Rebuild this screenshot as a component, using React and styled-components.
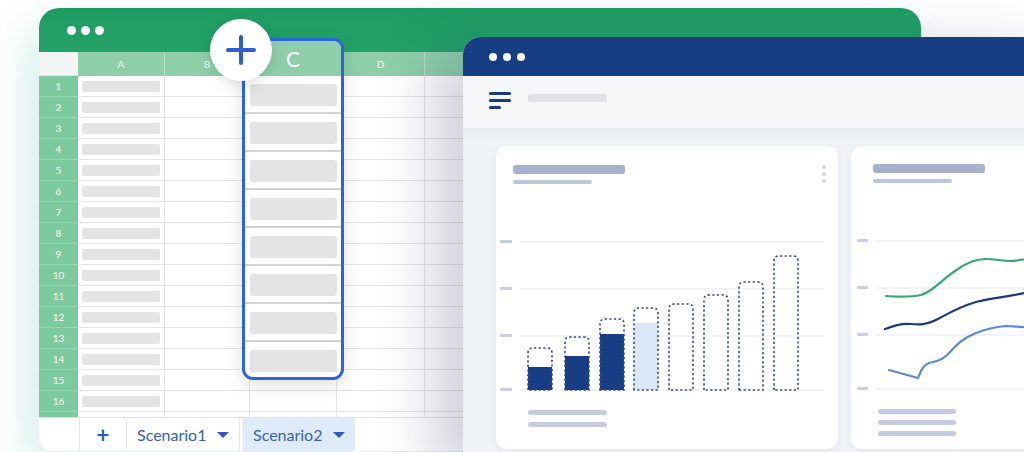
import { Fragment } from "react";
import styled, { createGlobalStyle } from "styled-components";

const GlobalStyle = createGlobalStyle`
    html, body {
        margin: 0;
        padding: 0;
        background: #ffffff;
    }
    body {
        font-family: Lato, "Open Sans", sans-serif;
    }
`

const Canvas = styled.div`
    position: relative;
    width: 1024px;
    height: 452px;
    overflow: hidden;
    background: #ffffff;
`

/* ---------- spreadsheet window ---------- */

const SheetWindow = styled.div`
    position: absolute;
    left: 39px;
    top: 8px;
    width: 882px;
    height: 443px;
    display: flex;
    flex-direction: column;
    background: #ffffff;
    border-radius: 20px 20px 0 14px;
    overflow: hidden;
    box-shadow: -14px 18px 40px rgba(80, 185, 175, 0.22);
`

const SheetTitleBar = styled.div`
    height: 44px;
    flex: none;
    display: flex;
    align-items: center;
    gap: 5px;
    padding-left: 28px;
    background: linear-gradient(180deg, #1f9c63 0%, #23a268 100%);
`

const Dot = styled.span`
    width: ${p => p.size}px;
    height: ${p => p.size}px;
    border-radius: 50%;
    background: #ffffff;
`

const SheetGrid = styled.div`
    flex: 1;
    display: grid;
    grid-template-columns: 39px 87px 85px 87px 88px 1fr;
    grid-template-rows: 24px;
    grid-auto-rows: 21px;
    overflow: hidden;
`

const CornerCell = styled.div`
    background: #f3f4f4;
    border-bottom: 1px solid #e2e2e2;
`

const ColHeader = styled.div`
    display: flex;
    align-items: center;
    justify-content: center;
    background: #8ecfaa;
    color: #ffffff;
    font-size: 10px;
    border-right: 1px solid rgba(255, 255, 255, 0.35);
`

const RowNum = styled.div`
    display: flex;
    align-items: center;
    justify-content: center;
    background: #7dc9a0;
    color: #ffffff;
    font-size: 10px;
    border-bottom: 1px solid #97d5b3;
`

const Cell = styled.div`
    display: flex;
    align-items: center;
    padding: 0 4px;
    background: #ffffff;
    border-right: 1px solid #e4e4e4;
    border-bottom: 1px solid #e4e4e4;
`

const CellBar = styled.div`
    width: 100%;
    height: 11px;
    border-radius: 2px;
    background: #e4e4e4;
`

const TabBar = styled.div`
    height: 33px;
    flex: none;
    display: flex;
    background: #ffffff;
    border-top: 1px solid #e2e2e2;
`

const Tab = styled.div`
    width: ${p => p.width}px;
    flex: none;
    display: flex;
    align-items: center;
    justify-content: ${p => (p.center ? "center" : "flex-start")};
    gap: 11px;
    padding-left: ${p => (p.center ? 0 : 10)}px;
    box-sizing: border-box;
    margin-right: ${p => p.gapRight || 0}px;
    background: ${p => (p.active ? "#dfeafa" : "#ffffff")};
    border-right: 1px solid #e6e6e6;
    color: #3461bf;
    font-size: 16px;
`

const PlusGlyph = styled.span`
    font-size: 22px;
    font-weight: 700;
    line-height: 1;
    color: #2d5bbf;
`

const Caret = styled.span`
    width: 0;
    height: 0;
    border-left: 6px solid transparent;
    border-right: 6px solid transparent;
    border-top: 6px solid #2d5bbf;
`

const ColumnLift = styled.div`
    position: absolute;
    left: 242px;
    top: 38px;
    width: 102px;
    height: 342px;
    box-sizing: border-box;
    display: flex;
    flex-direction: column;
    border: 3px solid #2f63d9;
    border-radius: 11px;
    overflow: hidden;
    background: #ffffff;
    box-shadow: 0 6px 18px rgba(0, 0, 0, 0.12);
`

const LiftHeader = styled.div`
    height: 35px;
    flex: none;
    display: flex;
    align-items: center;
    justify-content: center;
    background: #8ecfaa;
    color: #ffffff;
    font-size: 21px;
    font-weight: 400;
`

const LiftSlot = styled.div`
    padding: 8px 4px 6px 5px;
    border-bottom: ${p => (p.last ? "none" : "2px solid #d3d3d3")};
`

const LiftBox = styled.div`
    height: 22px;
    border-radius: 3px;
    background: #e3e3e3;
`

const PlusBadge = styled.div`
    position: absolute;
    left: 210px;
    top: 19px;
    width: 62px;
    height: 62px;
    border-radius: 50%;
    display: flex;
    align-items: center;
    justify-content: center;
    background: #ffffff;
    box-shadow: 0 4px 14px rgba(0, 0, 0, 0.13);
`

/* ---------- dashboard window ---------- */

const DashWindow = styled.div`
    position: absolute;
    left: 463px;
    top: 37px;
    width: 600px;
    height: 430px;
    display: flex;
    flex-direction: column;
    background: #eff2f6;
    border-radius: 18px 0 0 0;
    overflow: hidden;
    box-shadow: -30px 10px 55px rgba(40, 50, 90, 0.22);
`

const DashTitleBar = styled.div`
    height: 39px;
    flex: none;
    display: flex;
    align-items: center;
    gap: 6px;
    padding-left: 26px;
    background: #173d85;
`

const DashHeader = styled.div`
    height: 52px;
    flex: none;
    display: flex;
    align-items: flex-start;
    gap: 17px;
    padding: 16px 0 0 26px;
    box-sizing: border-box;
    background: #f6f7f9;
    box-shadow: 0 6px 12px rgba(30, 40, 80, 0.03);
`

const MenuIcon = styled.div`
    display: flex;
    flex-direction: column;
    gap: 4px;
    span {
        height: 3px;
        border-radius: 2px;
        background: #1b3a80;
    }
`

const Placeholder = styled.div`
    width: ${p => p.w}px;
    height: ${p => p.h}px;
    margin-top: ${p => p.mt || 0}px;
    border-radius: ${p => p.r || 2}px;
    background: ${p => p.color};
`

const CardRow = styled.div`
    display: flex;
    gap: 13px;
    padding: 18px 0 0 33px;
`

const Card = styled.div`
    width: 342px;
    height: 303px;
    flex: none;
    display: flex;
    flex-direction: column;
    padding-top: ${p => p.pt}px;
    box-sizing: border-box;
    background: #ffffff;
    border-radius: 10px;
    box-shadow: 0 2px 8px rgba(30, 40, 80, 0.05);
`

const CardHeader = styled.div`
    display: flex;
    justify-content: space-between;
    padding: 0 12px 0 ${p => p.pl}px;
`

const Kebab = styled.div`
    display: flex;
    flex-direction: column;
    gap: 3px;
    span {
        width: 4px;
        height: 4px;
        border-radius: 50%;
        background: #d3d6de;
    }
`

const ChartSvg = styled.svg`
    display: block;
    margin-top: ${p => p.mt}px;
`

const Legend = styled.div`
    display: flex;
    flex-direction: column;
    gap: ${p => p.gap}px;
    padding-left: ${p => p.pl}px;
    margin-top: ${p => p.mt || 0}px;
`

const grid1 = [12, 59, 106, 160]
const grid2 = [10, 57, 104, 158]

const bars = [
    { x: 32, top: 118, fill: 137, color: "#173d85" },
    { x: 69, top: 107, fill: 126, color: "#173d85" },
    { x: 104, top: 89, fill: 104, color: "#173d85" },
    { x: 138, top: 78, fill: 93, color: "#dae7f8" },
    { x: 173, top: 74 },
    { x: 208, top: 65 },
    { x: 243, top: 52 },
    { x: 278, top: 26 },
]

const barPath = (x, top, bottom, w, r) =>
    `M${x} ${bottom} V${top + r} Q${x} ${top} ${x + r} ${top} H${x + w - r} Q${x + w} ${top} ${x + w} ${top + r} V${bottom} Z`

const BarChart = () => (
    <ChartSvg width="342" height="180" mt={46}>
        {grid1.map(y => (
            <g key={y}>
                <rect x="4" y={y - 2} width="12" height="3" rx="1" fill="#c9cde2" />
                <line x1="24" x2="328" y1={y} y2={y} stroke="#e6e8ee" strokeWidth="1" />
            </g>
        ))}
        {bars.map(b => (
            <g key={b.x}>
                {b.fill && (
                    <rect x={b.x} y={b.fill} width="24" height={160 - b.fill} fill={b.color} />
                )}
                <path
                    d={barPath(b.x, b.top, 160, 24, 5)}
                    fill="none"
                    stroke="#3d4a7d"
                    strokeWidth="1.6"
                    strokeDasharray="2.2 2.4"
                />
            </g>
        ))}
    </ChartSvg>
)

const LineChart = () => (
    <ChartSvg width="342" height="178" mt={48}>
        {grid2.map(y => (
            <g key={y}>
                <rect x="6" y={y - 2} width="11" height="3" rx="1" fill="#c9cde2" />
                <line x1="25" x2="342" y1={y} y2={y} stroke="#e6e8ee" strokeWidth="1" />
            </g>
        ))}
        <path
            d="M35 65 C50 66 60 66 70 64 C82 61 92 47 107 38 C117 31 127 28 135 28 C145 28 150 30 160 30 C168 30 172 27 200 26"
            fill="none" stroke="#38a574" strokeWidth="2.2" strokeLinecap="round"
        />
        <path
            d="M34 98 C44 94 52 92 60 93 C68 94 75 94 87 88 C100 81 108 76 125 71 C140 67 155 66 174 62 L200 58"
            fill="none" stroke="#1d3a7e" strokeWidth="2.2" strokeLinecap="round"
        />
        <path
            d="M38 139 L67 147 C70 140 72 134 78 132 C84 130 88 131 95 125 C105 115 110 108 125 102 C135 98 145 96 155 95 C165 95 170 97 200 97"
            fill="none" stroke="#5b86e0" strokeWidth="2.2" strokeLinecap="round"
        />
    </ChartSvg>
)

// column C of the grid sits under the lifted column, so its own letter stays empty
const columns = ["A", "B", "", "D", ""]
const rows = Array.from({ length: 17 }, (_, i) => i + 1)

const App = () => {
    return (
        <>
            <GlobalStyle />
            <Canvas>
                <SheetWindow>
                    <SheetTitleBar>
                        <Dot size={9} />
                        <Dot size={9} />
                        <Dot size={9} />
                    </SheetTitleBar>
                    <SheetGrid>
                        <CornerCell />
                        {columns.map((c, i) => (
                            <ColHeader key={i}>{c}</ColHeader>
                        ))}
                        {rows.map(r => (
                            <Fragment key={r}>
                                <RowNum>{r <= 16 ? r : ""}</RowNum>
                                {columns.map((c, i) => (
                                    <Cell key={i}>{i === 0 && <CellBar />}</Cell>
                                ))}
                            </Fragment>
                        ))}
                    </SheetGrid>
                    <TabBar>
                        <Tab width={41} />
                        <Tab width={47} center>
                            <PlusGlyph>+</PlusGlyph>
                        </Tab>
                        <Tab width={113} gapRight={3}>
                            Scenario1 <Caret />
                        </Tab>
                        <Tab width={112} active>
                            Scenario2 <Caret />
                        </Tab>
                    </TabBar>
                </SheetWindow>

                <ColumnLift>
                    <LiftHeader>C</LiftHeader>
                    {Array.from({ length: 8 }, (_, i) => (
                        <LiftSlot key={i} last={i === 7}>
                            <LiftBox />
                        </LiftSlot>
                    ))}
                </ColumnLift>

                <PlusBadge>
                    <svg width="30" height="30" viewBox="0 0 30 30">
                        <path d="M15 2 V28 M2 15 H28" stroke="#2c5fd0" strokeWidth="4" strokeLinecap="round" />
                    </svg>
                </PlusBadge>

                <DashWindow>
                    <DashTitleBar>
                        <Dot size={8} />
                        <Dot size={8} />
                        <Dot size={8} />
                    </DashTitleBar>
                    <DashHeader>
                        <MenuIcon>
                            <span style={{ width: 22 }} />
                            <span style={{ width: 22 }} />
                            <span style={{ width: 12 }} />
                        </MenuIcon>
                        <Placeholder w={79} h={8} mt={2} color="#dfe2e9" />
                    </DashHeader>
                    <CardRow>
                        <Card pt={19}>
                            <CardHeader pl={17}>
                                <div>
                                    <Placeholder w={112} h={9} r={3} color="#a7b1cd" />
                                    <Placeholder w={79} h={4} mt={6} color="#bcc6de" />
                                </div>
                                <Kebab>
                                    <span />
                                    <span />
                                    <span />
                                </Kebab>
                            </CardHeader>
                            <BarChart />
                            <Legend gap={7} pl={32}>
                                <Placeholder w={79} h={5} r={3} color="#c5cbe0" />
                                <Placeholder w={79} h={5} r={3} color="#c5cbe0" />
                            </Legend>
                        </Card>
                        <Card pt={18}>
                            <CardHeader pl={22}>
                                <div>
                                    <Placeholder w={112} h={9} r={3} color="#a7b1cd" />
                                    <Placeholder w={79} h={4} mt={6} color="#bcc6de" />
                                </div>
                            </CardHeader>
                            <LineChart />
                            <Legend gap={6} pl={27}>
                                <Placeholder w={78} h={5} r={3} color="#c5cbe0" />
                                <Placeholder w={78} h={5} r={3} color="#c5cbe0" />
                                <Placeholder w={78} h={5} r={3} color="#c5cbe0" />
                            </Legend>
                        </Card>
                    </CardRow>
                </DashWindow>
            </Canvas>
        </>
    )
}

export default App;
